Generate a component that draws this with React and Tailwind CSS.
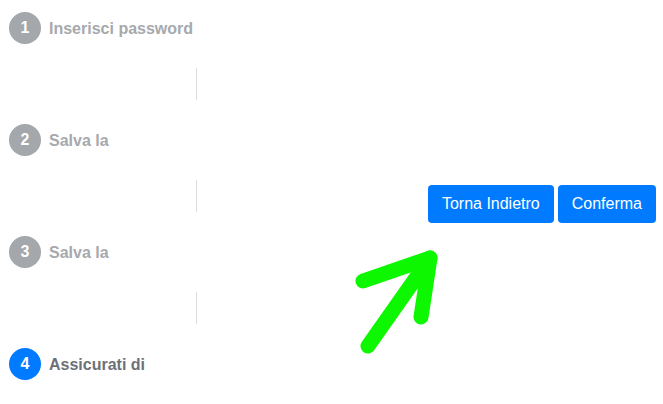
import React from 'react';

const steps = [
    { n: 1, label: 'Inserisci password' },
    { n: 2, label: 'Salva la' },
    { n: 3, label: 'Salva la' },
    { n: 4, label: 'Assicurati di', active: true },
];

const App = () => {
    return (
        <div className="relative flex h-[404px] w-[663px] bg-white font-['Liberation_Sans',Arial,sans-serif]">
            {/* Steps */}
            <div className="w-[400px] pl-[9px]">
                {steps.map((step, i) => (
                    <div key={step.n}>
                        <div className="flex h-14 items-center">
                            <div
                                className={`flex h-8 w-8 items-center justify-center rounded-full text-base font-bold text-white ${
                                    step.active ? 'bg-[#007bff]' : 'bg-[#a4a7ab]'
                                }`}
                            >
                                {step.n}
                            </div>
                            <span
                                className={`ml-2 mt-px text-base font-bold ${
                                    step.active ? 'text-[#6c7177]' : 'text-[#a6a9ad]'
                                }`}
                            >
                                {step.label}
                            </span>
                        </div>
                        {i < steps.length - 1 && (
                            <div className="py-3 pl-[187px]">
                                <div className="h-8 w-px bg-[#dcdcdc]" />
                            </div>
                        )}
                    </div>
                ))}
            </div>

            {/* Actions */}
            <div className="flex flex-1 items-center justify-end gap-1 pr-[7px] pt-1">
                <button className="h-[38px] rounded bg-[#007bff] px-[14px] text-base text-white">
                    Torna Indietro
                </button>
                <button className="h-[38px] rounded bg-[#007bff] px-[14px] text-base text-white">
                    Conferma
                </button>
            </div>

            {/* Annotation arrow */}
            <svg className="absolute left-0 top-0" width="663" height="404" viewBox="0 0 663 404">
                <g stroke="#0cf700" strokeWidth="15" strokeLinecap="round" strokeLinejoin="round" fill="none">
                    <path d="M368 346 L430 258" />
                    <path d="M363 281 L430 258 L421 317" />
                </g>
            </svg>
        </div>
    );
};

export default App;
